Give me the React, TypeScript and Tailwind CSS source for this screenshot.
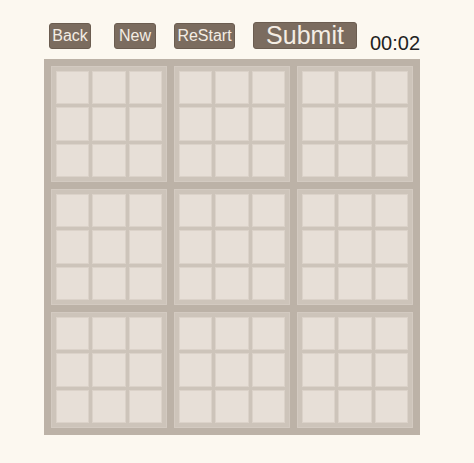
import React from "react";

const boxes = Array.from({ length: 9 });
const cells = Array.from({ length: 9 });

export default function App() {
  return (
    <div
      className="min-h-screen w-full bg-[#fcf8f0] pt-[22px] pl-[44px]"
      style={{ fontFamily: "'Liberation Sans', Arial, sans-serif" }}
    >
      <div className="flex items-center h-[27px]">
        <button className="ml-[5px] w-[42px] h-[26px] rounded-[3px] bg-[#7b6c5f] border border-[#6b5d51] text-[#f4ede4] text-[16px] leading-none flex items-center justify-center">
          Back
        </button>
        <button className="ml-[23px] w-[42px] h-[26px] rounded-[3px] bg-[#7b6c5f] border border-[#6b5d51] text-[#f4ede4] text-[16px] leading-none flex items-center justify-center">
          New
        </button>
        <button className="ml-[18px] w-[61px] h-[26px] rounded-[3px] bg-[#7b6c5f] border border-[#6b5d51] text-[#f4ede4] text-[16px] leading-none flex items-center justify-center">
          ReStart
        </button>
        <button className="ml-[18px] w-[104px] h-[27px] rounded-[3px] bg-[#7b6c5f] border border-[#6b5d51] text-[#f4ede4] text-[25px] leading-none flex items-center justify-center">
          Submit
        </button>
        <span className="ml-[13px] mt-[14px] text-[20px] leading-none text-[#222]">00:02</span>
      </div>
      <div className="mt-[10px] w-[376px] h-[376px] bg-[#bcb2a7] p-[7px] grid grid-cols-3 grid-rows-3 gap-[7px]">
        {boxes.map((_, i) => (
          <div
            key={i}
            className="bg-[#cdc4ba] border border-[#d3cac1] p-[4px] grid grid-cols-3 grid-rows-3 gap-[3px]"
          >
            {cells.map((_, j) => (
              <div key={j} className="bg-[#e7dfd7] border border-[#dbd2c9]" />
            ))}
          </div>
        ))}
      </div>
    </div>
  );
}
